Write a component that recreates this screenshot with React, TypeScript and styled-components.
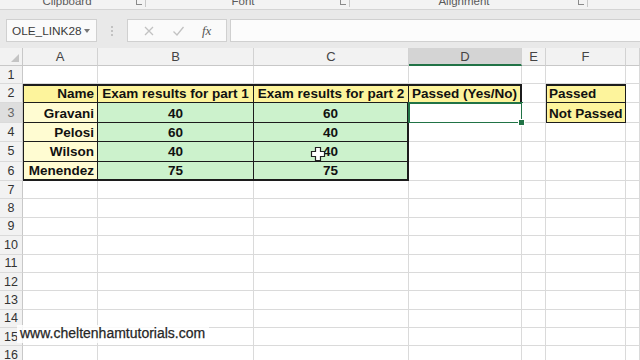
import * as React from 'react';
import styled, { createGlobalStyle, css } from 'styled-components';

const GlobalStyle = createGlobalStyle`
  html, body {
    margin: 0;
    padding: 0;
    width: 640px;
    height: 360px;
    overflow: hidden;
    background: #ffffff;
    font-family: "Liberation Sans", Arial, sans-serif;
  }
`;

const SELECT_GREEN = `#217346`;
const GRID_LINE = `#dadada`;
const INK = `#1c1c1c`;

const Screen = styled.div`
  position: relative;
  width: 640px;
  height: 360px;
  overflow: hidden;
  display: flex;
  flex-direction: column;
`;

/* ---- ribbon group labels, cut at the top edge ---- */
const RibbonStrip = styled.div`
  flex-shrink: 0;
  height: 9px;
  overflow: hidden;
  background: #f3f3f3;
  border-bottom: 1px solid #d4d4d4;
  display: grid;
  grid-template-columns: 134px 14px 190px 14px 224px 14px 1fr;
`;

const GroupLabel = styled.div`
  font-size: 11.5px;
  line-height: 14px;
  margin-top: -6px;
  color: #5a5a5a;
  text-align: center;
  white-space: nowrap;
`;

const Launcher = styled.div`
  display: flex;
  align-items: flex-start;
  justify-content: center;
  gap: 3px;

  &::before {
    content: '';
    width: 5px;
    height: 4px;
    border: 1px solid #8a8a8a;
    border-top: none;
    border-right: none;
  }
  &::after {
    content: '';
    width: 1px;
    height: 7px;
    background: #c8c8c8;
  }
`;

/* ---- formula bar ---- */
const FormulaArea = styled.div`
  flex-shrink: 0;
  height: 38px;
  background: #e9e9e9;
  display: flex;
  align-items: flex-start;
  padding: 9px 0 0 6px;
  box-sizing: border-box;
`;

const NameBox = styled.div`
  width: 91px;
  height: 23px;
  box-sizing: border-box;
  background: #fafafa;
  border: 1px solid #d0d0d0;
  display: flex;
  align-items: center;
  justify-content: space-between;
  padding: 0 6px 0 5px;
  font-size: 11.8px;
  color: #3a3a3a;
`;

const Caret = styled.span`
  width: 0;
  height: 0;
  border-left: 3px solid transparent;
  border-right: 3px solid transparent;
  border-top: 4px solid #777;
`;

const Grip = styled.div`
  width: 30px;
  display: flex;
  flex-direction: column;
  align-items: center;
  justify-content: center;
  gap: 2px;
  height: 23px;

  span {
    width: 2px;
    height: 2px;
    border-radius: 1px;
    background: #b5b5b5;
  }
`;

const ActionBox = styled.div`
  width: 100px;
  height: 23px;
  box-sizing: border-box;
  background: #fafafa;
  border: 1px solid #d0d0d0;
  display: flex;
  align-items: center;
  justify-content: space-around;
  padding: 0 6px;
`;

const FxLabel = styled.span`
  font-family: "Liberation Serif", "Times New Roman", serif;
  font-style: italic;
  font-size: 13px;
  color: #555;
`;

const FormulaInput = styled.div`
  flex: 1;
  height: 23px;
  margin-left: 3px;
  background: #fcfcfc;
  border: 1px solid #d0d0d0;
  border-right: none;
  box-sizing: border-box;
`;

/* ---- sheet grid ---- */
const Sheet = styled.div`
  flex: 1 0 auto;
  display: grid;
  grid-template-columns: 23px 75px 156px 155px 113px 24px 80px 1fr;
  grid-template-rows: 18px 18px repeat(5, 19.4px) repeat(10, 18.4px);
  background: #fff;
`;

const Corner = styled.div`
  position: relative;
  background: #f2f2f2;
  border-right: 1px solid #c8c8c8;
  border-bottom: 1px solid #c8c8c8;

  &::after {
    content: '';
    position: absolute;
    right: 3px;
    bottom: 3px;
    border-left: 8px solid transparent;
    border-bottom: 8px solid #c4c4c4;
  }
`;

const ColHead = styled.div<{ $active?: boolean }>`
  box-sizing: border-box;
  background: ${({ $active }) => ($active ? '#d4d4d4' : '#f2f2f2')};
  border-right: 1px solid #d2d2d2;
  border-bottom: ${({ $active }) =>
    $active ? `2px solid ${SELECT_GREEN}` : '1px solid #c8c8c8'};
  display: flex;
  align-items: center;
  justify-content: center;
  font-size: 13px;
  color: #444;
`;

const RowHead = styled.div<{ $active?: boolean }>`
  box-sizing: border-box;
  background: ${({ $active }) => ($active ? '#dedede' : '#f2f2f2')};
  border-right: 1px solid #c8c8c8;
  border-bottom: 1px solid ${GRID_LINE};
  display: flex;
  align-items: center;
  justify-content: center;
  font-size: 12.5px;
  color: ${({ $active }) => ($active ? '#666' : '#333')};
`;

type Tone = 'none' | 'head' | 'name' | 'score';

const FILLS: Record<Tone, string> = {
  none: '#ffffff',
  head: '#fdf49c',
  name: '#fffcd2',
  score: '#ccf2cc',
};

const Cell = styled.div<{
  $tone?: Tone;
  $align?: 'left' | 'center' | 'right';
  $ink?: boolean;
  $right?: number;
  $bottom?: number;
  $top?: boolean;
  $left?: boolean;
  $selected?: boolean;
}>`
  position: relative;
  box-sizing: border-box;
  min-width: 0;
  overflow: visible;
  white-space: nowrap;
  background: ${({ $tone = 'none' }) => FILLS[$tone]};
  border-right: ${({ $ink, $right = 1 }) =>
    `${$right}px solid ${$ink ? INK : GRID_LINE}`};
  border-bottom: ${({ $ink, $bottom = 1 }) =>
    `${$bottom}px solid ${$ink ? INK : GRID_LINE}`};
  box-shadow: ${({ $top, $left }) =>
    [$top && `inset 0 2px 0 ${INK}`, $left && `inset 1px 0 0 ${INK}`]
      .filter(Boolean)
      .join(', ') || 'none'};
  display: flex;
  align-items: center;
  justify-content: ${({ $align = 'left' }) =>
    $align === 'left'
      ? 'flex-start'
      : $align === 'right'
        ? 'flex-end'
        : 'center'};
  padding: 1px 3px 0 3px;
  font-size: 13.5px;
  font-weight: 700;
  color: #111;

  ${({ $selected }) =>
    $selected &&
    css`
      &::after {
        content: '';
        position: absolute;
        left: -1px;
        top: -1px;
        right: -2px;
        bottom: -2px;
        border: 2px solid ${SELECT_GREEN};
        box-sizing: border-box;
      }
      &::before {
        content: '';
        position: absolute;
        right: -4px;
        bottom: -4px;
        width: 5px;
        height: 5px;
        background: ${SELECT_GREEN};
        border: 1px solid #fff;
        z-index: 2;
      }
    `}
`;

const Watermark = styled.div`
  position: absolute;
  left: 17px;
  top: 325px;
  padding: 0 4px 1px 3px;
  background: rgba(255, 255, 255, 0.82);
  font-size: 14px;
  line-height: 17px;
  color: #262626;
  -webkit-text-stroke: 0.25px #262626;
`;

const Pointer = styled.svg`
  position: absolute;
  left: 310px;
  top: 146px;
`;

type Row = {
  name: string;
  p1: string;
  p2: string;
  key?: string;
};

const ROWS: Row[] = [
  { name: 'Gravani', p1: '40', p2: '60', key: 'Not Passed' },
  { name: 'Pelosi', p1: '60', p2: '40' },
  { name: 'Wilson', p1: '40', p2: '40' },
  { name: 'Menendez', p1: '75', p2: '75' },
];

const COLUMNS = ['A', 'B', 'C', 'D', 'E', 'F', ''];

function XIcon() {
  return (
    <svg width="12" height="12" viewBox="0 0 12 12">
      <path d="M2 2 L10 10 M10 2 L2 10" stroke="#c2c2c2" strokeWidth="1.3" />
    </svg>
  );
}

function CheckIcon() {
  return (
    <svg width="13" height="12" viewBox="0 0 13 12">
      <path
        d="M1.5 6.5 L5 10 L11.5 2"
        stroke="#c2c2c2"
        strokeWidth="1.3"
        fill="none"
      />
    </svg>
  );
}

function EmptyRow(props: { n: number }) {
  return (
    <>
      <RowHead>{props.n}</RowHead>
      {COLUMNS.map((c, i) => (
        <Cell key={`${props.n}-${i}`} />
      ))}
    </>
  );
}

function HeaderRow() {
  return (
    <>
      <RowHead>2</RowHead>
      <Cell $tone="head" $align="right" $ink $top $left>
        Name
      </Cell>
      <Cell $tone="head" $align="center" $ink $top>
        Exam results for part 1
      </Cell>
      <Cell $tone="head" $align="center" $ink $top>
        Exam results for part 2
      </Cell>
      <Cell $tone="head" $ink $top $right={2}>
        Passed (Yes/No)
      </Cell>
      <Cell />
      <Cell $tone="head" $ink $top $left>
        Passed
      </Cell>
      <Cell />
    </>
  );
}

function DataRow(props: { row: Row; n: number; last: boolean }) {
  const { row, n, last } = props;
  const bottom = last ? 2 : 1;
  return (
    <>
      <RowHead $active={n === 3}>{n}</RowHead>
      <Cell $tone="name" $align="right" $ink $left $bottom={bottom}>
        {row.name}
      </Cell>
      <Cell $tone="score" $align="center" $ink $bottom={bottom}>
        {row.p1}
      </Cell>
      <Cell $tone="score" $align="center" $ink $right={2} $bottom={bottom}>
        {row.p2}
      </Cell>
      <Cell $selected={n === 3} />
      <Cell />
      {row.key ? (
        <Cell $tone="head" $ink $left>
          {row.key}
        </Cell>
      ) : (
        <Cell />
      )}
      <Cell />
    </>
  );
}

export default function App() {
  return (
    <>
      <GlobalStyle />
      <Screen>
        <RibbonStrip>
          <GroupLabel>Clipboard</GroupLabel>
          <Launcher />
          <GroupLabel>Font</GroupLabel>
          <Launcher />
          <GroupLabel>Alignment</GroupLabel>
          <Launcher />
          <GroupLabel />
        </RibbonStrip>

        <FormulaArea>
          <NameBox>
            OLE_LINK28
            <Caret />
          </NameBox>
          <Grip>
            <span />
            <span />
            <span />
          </Grip>
          <ActionBox>
            <XIcon />
            <CheckIcon />
            <FxLabel>fx</FxLabel>
          </ActionBox>
          <FormulaInput />
        </FormulaArea>

        <Sheet>
          <Corner />
          {COLUMNS.map((c) => (
            <ColHead key={`h-${c}`} $active={c === 'D'}>
              {c}
            </ColHead>
          ))}
          <EmptyRow n={1} />
          <HeaderRow />
          {ROWS.map((row, i) => (
            <DataRow
              key={row.name}
              row={row}
              n={i + 3}
              last={i === ROWS.length - 1}
            />
          ))}
          {[7, 8, 9, 10, 11, 12, 13, 14, 15, 16].map((n) => (
            <EmptyRow key={n} n={n} />
          ))}
        </Sheet>

        <Pointer width="16" height="16" viewBox="0 0 16 16">
          <path
            d="M5.5 1.5 H10.5 V5.5 H14.5 V10.5 H10.5 V14.5 H5.5 V10.5 H1.5 V5.5 H5.5 Z"
            fill="#ffffff"
            stroke="#222"
            strokeWidth="1.2"
          />
        </Pointer>

        <Watermark>www.cheltenhamtutorials.com</Watermark>
      </Screen>
    </>
  );
}
